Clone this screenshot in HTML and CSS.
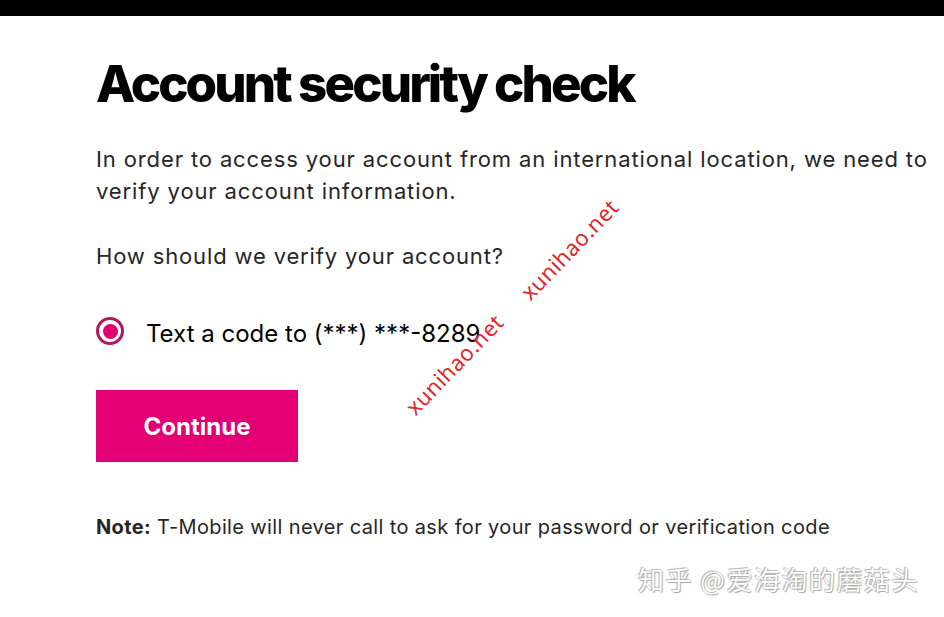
FILE: index.html
```html
<!DOCTYPE html>
<html>
<head>
<meta charset="utf-8">
<link rel="stylesheet" href="styles.css">
</head>
<body>
<div class="topbar"></div>
<main class="content">
  <h1 class="title">Account security check</h1>
  <p class="lead">In order to access your account from an international location, we need to verify your account information.</p>
  <p class="question">How should we verify your account?</p>
  <label class="option">
    <span class="radio"><span class="dot"></span></span>
    <span class="option-text">Text a code to (***) ***-8289</span>
  </label>
  <button class="btn">Continue</button>
  <p class="note"><strong>Note:</strong> T-Mobile will never call to ask for your password or verification code</p>
</main>
<div class="wm wm1">xunihao.net</div>
<div class="wm wm2">xunihao.net</div>
<div class="zhihu">知乎 @爱海淘的蘑菇头</div>
</body>
</html>
```
FILE: styles.css
```css
html, body { margin: 0; padding: 0; background: #fff; }
body { font-family: Inter, "Noto Sans", sans-serif; color: #262626; position: relative; height: 617px; overflow: hidden; }
.topbar { height: 16px; background: #000; }
.content { padding: 0 0 0 96px; width: 845px; }
.title { margin: 38px 0 0 0; font-size: 51px; font-weight: 800; letter-spacing: -2.9px; color: #000; line-height: 60px; }
.lead { margin: 29px 0 0 0; font-size: 22px; line-height: 32px; letter-spacing: 0.88px; }
.question { margin: 33px 0 0 0; font-size: 22px; line-height: 32px; letter-spacing: 0.85px; }
.option { display: flex; align-items: center; gap: 24px; margin-top: 45px; }
.radio { width: 22px; height: 22px; border: 3.5px solid #b5175f; border-radius: 50%; display: flex; align-items: center; justify-content: center; margin-bottom: 6px; }
.dot { width: 15px; height: 15px; border-radius: 50%; background: #e20074; }
.option-text { font-size: 24px; line-height: 28px; color: #000; letter-spacing: 0; margin-left: -2px; }
.btn { display: block; margin-top: 39px; width: 202px; height: 72px; background: #e20074; color: #fff; border: 0; font-family: Inter, sans-serif; font-weight: 700; font-size: 24px; padding: 0; }
.note { margin: 52px 0 0 0; font-size: 20px; line-height: 26px; letter-spacing: 0.37px; }
.note strong { font-weight: 700; }
.wm { position: absolute; color: #e0282e; font-family: "Noto Sans", sans-serif; font-size: 22px; line-height: 22px; letter-spacing: 0.5px; transform: rotate(-46deg); transform-origin: left bottom; white-space: nowrap; }
.wm1 { left: 532px; top: 281px; }
.wm2 { left: 417px; top: 396px; }
.zhihu { position: absolute; left: 638px; top: 560px; font-family: "Noto Sans CJK SC", sans-serif; font-size: 26px; color: #fff; text-shadow: 0 0 1px #999, 1px 1px 1px #aaa, -1px -1px 1px #bbb; letter-spacing: 1.5px; }
```
